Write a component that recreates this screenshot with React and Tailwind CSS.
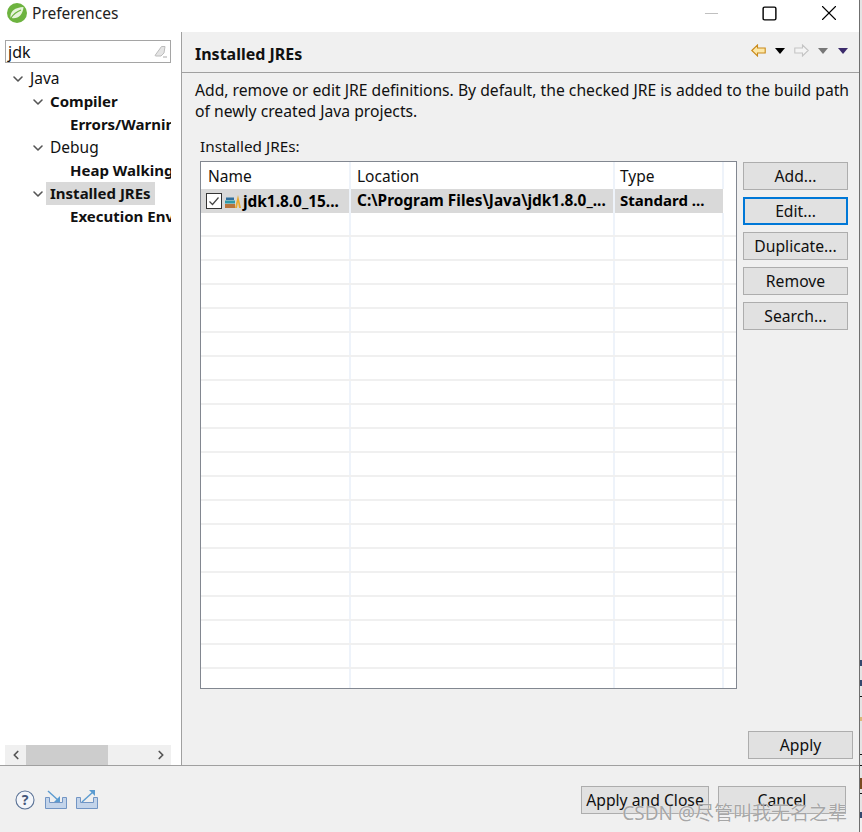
import { ChevronDown, ChevronLeft, ChevronRight, Minus, Square, X } from "lucide-react";

const font = { fontFamily: "'Noto Sans', 'Noto Sans CJK SC', sans-serif" };

// left tree, depth decides the indent
const tree = [
  { label: "Java", depth: 0, open: true },
  { label: "Compiler", depth: 1, open: true, bold: true },
  { label: "Errors/Warnings", depth: 2, bold: true },
  { label: "Debug", depth: 1, open: true },
  { label: "Heap Walking", depth: 2, bold: true },
  { label: "Installed JREs", depth: 1, open: true, bold: true, selected: true },
  { label: "Execution Environments", depth: 2, bold: true },
];

const sideButtons = ["Add...", "Edit...", "Duplicate...", "Remove", "Search..."];

// bits of the window behind, seen in the last pixels on the right
const sliver = [
  { h: 660, c: "bg-[#e4e4e4]" },
  { h: 6, c: "bg-[#33486e]" },
  { h: 14, c: "bg-[#e4e4e4]" },
  { h: 6, c: "bg-[#33486e]" },
  { h: 10, c: "bg-[#e4e4e4]" },
  { h: 1, c: "bg-[#111111]" },
  { h: 20, c: "bg-[#e4e4e4]" },
  { h: 4, c: "bg-[#d9b878]" },
  { h: 33, c: "bg-[#e4e4e4]" },
  { h: 1, c: "bg-[#111111]" },
  { h: 10, c: "bg-[#e4e4e4]" },
  { h: 1, c: "bg-[#111111]" },
  { h: 12, c: "bg-[#e4e4e4]" },
  { h: 11, c: "bg-[#7a4a20]" },
  { h: 4, c: "bg-[#e4e4e4]" },
  { h: 1, c: "bg-[#111111]" },
  { h: 18, c: "bg-[#e4e4e4]" },
  { h: 6, c: "bg-[#33486e]" },
];

function Btn({ children, focused, className = "" }) {
  return (
    <button
      className={`flex h-[28px] items-center justify-center bg-[#e1e1e1] pt-[2px] text-[15.7px] text-[#101010] ${
        focused ? "border-2 border-[#0078d7]" : "border border-[#adadad]"
      } ${className}`}
    >
      {children}
    </button>
  );
}

function SpringLogo() {
  return (
    <svg width="20" height="20" viewBox="0 0 20 20">
      <circle cx="10" cy="10" r="10" fill="#6db33f" />
      <path d="M3.5 14.5C3 8 8 4.5 16.5 4C16 11 12 15.5 6 15.2c-1 0-1.8-.2-2.5-.7Z" fill="#e6f3da" />
      <path d="M4 15c2.5-4 6-6.5 10-8" stroke="#6db33f" strokeWidth="1.2" fill="none" />
    </svg>
  );
}

function JreIcon() {
  return (
    <svg width="16" height="16" viewBox="0 0 16 16">
      <rect x="0" y="11" width="10" height="4" fill="#b8743c" />
      <rect x="0" y="7.5" width="10" height="3" fill="#2f9aa8" />
      <rect x="1" y="4.5" width="8" height="2.5" fill="#2f6e9c" />
      <path d="M10 15 13 2l3 13h-2L13 9l-1 6Z" fill="#e9a92e" />
    </svg>
  );
}

function BackArrow() {
  return (
    <svg width="15" height="13" viewBox="0 0 15 13">
      <path d="M.8 6.5 6.5 1v3h7.7v5H6.5v3Z" fill="#fde8a8" stroke="#c98a1b" strokeWidth="1.1" />
    </svg>
  );
}

function ForwardArrow() {
  return (
    <svg width="15" height="13" viewBox="0 0 15 13">
      <path d="M14.2 6.5 8.5 1v3H.8v5h7.7v3Z" fill="#f4f4f4" stroke="#c4c4c4" strokeWidth="1.1" />
    </svg>
  );
}

function Tri({ color }) {
  return (
    <svg width="10" height="6" viewBox="0 0 10 6">
      <path d="M0 0h10L5 6Z" fill={color} />
    </svg>
  );
}

function TrayIcon({ out }) {
  return (
    <svg width="22" height="20" viewBox="0 0 22 20">
      <path d="M.5 7.5h4v5h13v-5h4v11H.5Z" fill="#c3d4ea" stroke="#7295c4" />
      <path d={out ? "M6 12 17 2" : "M3 1l11 10"} stroke="#5b9bd0" strokeWidth="1.4" fill="none" />
      <path d={out ? "M13 0h6v6Z" : "M15 12H9l6-6Z"} fill="#5b9bd0" />
    </svg>
  );
}

function Table() {
  const rows = Array.from({ length: 20 });
  return (
    <div className="h-[528px] w-[537px] overflow-hidden border border-[#828790] bg-white">
      <div className="flex h-[27px] items-center text-[15.5px] text-[#101010]">
        <div className="h-full w-[150px] border-r-2 border-[#eef3fa] pl-[7px] pt-[3px]">Name</div>
        <div className="h-full w-[264px] border-r-2 border-[#eef3fa] pl-[6px] pt-[3px]">Location</div>
        <div className="h-full w-[109px] border-r-2 border-[#eef3fa] pl-[5px] pt-[3px]">Type</div>
      </div>
      <div className="flex h-[24px] w-[522px] items-center bg-[#d9d9d9] text-[15.4px] font-bold text-black">
        <div className="flex h-full w-[150px] items-center gap-[3px] border-r-2 border-[#eef3fa] pl-[5px]">
          <span className="flex h-[16px] w-[16px] shrink-0 items-center justify-center border border-[#333333] bg-white">
            <svg width="12" height="12" viewBox="0 0 12 12">
              <path d="M1.5 6.5 4.5 9.5 10.5 2.5" stroke="#444444" strokeWidth="1.2" fill="none" />
            </svg>
          </span>
          <JreIcon />
          <span className="-ml-[1px] whitespace-nowrap leading-[23px]">jdk1.8.0_15...</span>
        </div>
        <div className="h-full w-[264px] whitespace-nowrap border-r-2 border-[#eef3fa] pl-[6px] leading-[23px]">
          C:\Program Files\Java\jdk1.8.0_...
        </div>
        <div className="h-full w-[108px] whitespace-nowrap pl-[5px] text-[15px] leading-[22px]">Standard ...</div>
      </div>
      {rows.map((_, i) => (
        <div key={i} className="flex h-[24px] w-[535px] border-b-2 border-[#f0f0f0]">
          <div className="h-full w-[150px] border-r-2 border-[#eef3fa]" />
          <div className="h-full w-[264px] border-r-2 border-[#eef3fa]" />
          <div className="h-full w-[109px] border-r-2 border-[#eef3fa]" />
        </div>
      ))}
    </div>
  );
}

export default function App() {
  return (
    <div style={font} className="relative flex h-[832px] w-[862px] overflow-hidden bg-[#f0f0f0]">
      <div className="flex h-full w-[859px] shrink-0 flex-col">
        {/* title bar */}
        <div className="flex h-[32px] shrink-0 items-center bg-white pb-[6px] pl-[7px] text-[15.5px] text-[#222222]">
          <SpringLogo />
          <span className="ml-[5px] pt-[1px]">Preferences</span>
          <div className="ml-auto flex h-full items-center pr-[17px] text-black">
            <Minus size={21} strokeWidth={1.1} className="text-[#bdbdbd]" />
            <Square size={17} strokeWidth={2} className="ml-[39px]" />
            <X size={26} strokeWidth={1} className="ml-[38px]" />
          </div>
        </div>

        <div className="flex h-[733px] shrink-0">
          {/* left pane */}
          <div className="flex w-[182px] shrink-0 flex-col border-r border-[#a0a0a0] bg-white">
            <div className="mx-[5px] mt-[8px] flex h-[23px] w-[166px] items-center justify-between border border-[#a5a5a5] pl-[2px] pr-[3px] text-[16px] text-[#111111]">
              jdk
              <svg width="13" height="13" viewBox="0 0 13 13">
                <path d="M1 10.5 7.5 1.5h3.5L10 8l-3 3H2Z" fill="#e4e4e4" stroke="#bcbcbc" />
                <path d="M9 12h4" stroke="#a9a9a9" />
              </svg>
            </div>
            <div className="mt-[4px] w-[171px] flex-1 overflow-hidden text-[15px] text-[#111111]">
              {tree.map((n) => (
                <div
                  key={n.label}
                  className={`flex h-[23px] items-center whitespace-nowrap ${
                    n.depth === 0 ? "pl-[10px]" : n.depth === 1 ? "pl-[30px]" : "pl-[70px]"
                  } ${n.bold ? "font-bold" : "text-[15.5px]"}`}
                >
                  {n.depth < 2 && <ChevronDown size={16} strokeWidth={2.4} className="mr-[4px] shrink-0 text-[#555555]" />}
                  <span className={n.selected ? "-ml-[4px] bg-[#d9d9d9] px-[4px]" : ""}>{n.label}</span>
                </div>
              ))}
            </div>
            <div className="ml-[5px] flex h-[20px] w-[166px] items-center bg-[#f0f0f0] text-[#555555]">
              <div className="flex w-[21px] justify-center">
                <ChevronLeft size={14} strokeWidth={3} />
              </div>
              <div className="h-full w-[82px] bg-[#cdcdcd]" />
              <div className="ml-auto flex w-[21px] justify-center">
                <ChevronRight size={14} strokeWidth={3} />
              </div>
            </div>
          </div>

          {/* right pane */}
          <div className="flex min-w-0 flex-1 flex-col">
            <div className="flex h-[41px] shrink-0 items-start border-b border-[#a0a0a0] pl-[13px] pr-[11px] pt-[9px]">
              <span className="text-[16px] font-bold leading-[26px] text-[#111111]">Installed JREs</span>
              <div className="ml-auto mt-[3px] flex items-center">
                <BackArrow />
                <span className="ml-[9px] flex"><Tri color="#000000" /></span>
                <span className="ml-[9px] flex"><ForwardArrow /></span>
                <span className="ml-[9px] flex"><Tri color="#777777" /></span>
                <span className="ml-[10px] flex"><Tri color="#3b2a6b" /></span>
              </div>
            </div>
            <p className="ml-[13px] mt-[7px] w-[660px] text-[15.7px] leading-[21px] text-[#111111]">
              Add, remove or edit JRE definitions. By default, the checked JRE is added to the build path of newly created Java projects.
            </p>
            <div className="ml-[18px] mt-[14px] text-[15.3px] leading-[21px] text-[#111111]">Installed JREs:</div>
            <div className="ml-[18px] mt-[4px] flex">
              <Table />
              <div className="ml-[6px] flex w-[105px] flex-col gap-[7px] pt-[1px]">
                {sideButtons.map((b) => (
                  <Btn key={b} focused={b === "Edit..."}>{b}</Btn>
                ))}
              </div>
            </div>
            <div className="mt-[42px] flex justify-end pr-[6px]">
              <Btn className="w-[105px]">Apply</Btn>
            </div>
          </div>
        </div>

        {/* bottom bar */}
        <div className="flex flex-1 border-t border-[#a0a0a0] pl-[15px]">
          <div className="mt-[23px] flex h-[22px] items-center">
            <svg width="20" height="20" viewBox="0 0 20 20">
              <circle cx="10" cy="10" r="9" fill="#f4f6fa" stroke="#5a7296" strokeWidth="1.1" />
              <text x="10" y="15" textAnchor="middle" fontSize="14" fontWeight="700" fill="#45587a">?</text>
            </svg>
            <span className="ml-[10px] flex"><TrayIcon /></span>
            <span className="ml-[9px] flex"><TrayIcon out /></span>
          </div>
          <div className="ml-auto mt-[20px] flex gap-[9px] pr-[13px]">
            <Btn className="w-[128px]">Apply and Close</Btn>
            <Btn className="w-[128px]">Cancel</Btn>
          </div>
        </div>
      </div>

      {/* sliver of the window behind */}
      <div className="flex w-[3px] shrink-0 flex-col border-l border-[#6f6f6f]">
        {sliver.map((s, i) => (
          <div key={i} style={{ height: s.h }} className={s.c} />
        ))}
      </div>

      {/* image watermark */}
      <div className="absolute bottom-[6px] right-[15px] whitespace-nowrap text-[19px] leading-[26px] text-[#8f8f8f]/80 [text-shadow:0_0_1px_#ffffff]">
        CSDN @尽管叫我无名之辈
      </div>
    </div>
  );
}
